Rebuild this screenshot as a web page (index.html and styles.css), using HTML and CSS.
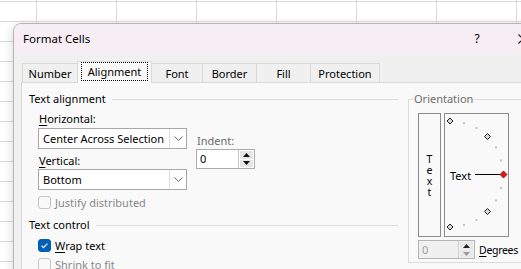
FILE: index.html
```html
<!DOCTYPE html>
<html>
<head>
<meta charset="utf-8">
<link rel="stylesheet" href="styles.css">
</head>
<body>
<div class="dialog">
  <div class="titlebar">
    <span class="title">Format Cells</span>
    <span class="help">?</span>
    <span class="close"><svg width="10" height="10" viewBox="0 0 10 10"><path d="M0.5 0.5L9.5 9.5M9.5 0.5L0.5 9.5" stroke="#1a1a1a" stroke-width="1.1" fill="none"/></svg></span>
  </div>
  <div class="tabs">
    <div class="tab t-number">Number</div>
    <div class="tab t-align active"><span class="focus">Alignment</span></div>
    <div class="tab t-font">Font</div>
    <div class="tab t-border">Border</div>
    <div class="tab t-fill">Fill</div>
    <div class="tab t-prot">Protection</div>
  </div>
  <div class="panel">
    <div class="left">
      <div class="heading"><span>Text alignment</span><i class="rule"></i></div>
      <div class="align-block">
        <div class="col1">
          <div class="lbl"><u>H</u>orizontal:</div>
          <div class="combo c1"><span class="val">Center Across Selection</span><span class="arrow"><svg width="9" height="5" viewBox="0 0 9 5"><path d="M0.5 0.5L4.5 4.5L8.5 0.5" stroke="#6a6a6a" fill="none"/></svg></span></div>
          <div class="lbl l2"><u>V</u>ertical:</div>
          <div class="combo"><span class="val">Bottom</span><span class="arrow"><svg width="9" height="5" viewBox="0 0 9 5"><path d="M0.5 0.5L4.5 4.5L8.5 0.5" stroke="#6a6a6a" fill="none"/></svg></span></div>
        </div>
        <div class="col2">
          <div class="lbl dim">Indent:</div>
          <div class="spin">
            <span class="sval">0</span>
            <span class="sbtns">
              <span class="sb"><svg width="7" height="4" viewBox="0 0 7 4"><path d="M3.5 0L7 4H0Z" fill="#111"/></svg></span>
              <span class="sb"><svg width="7" height="4" viewBox="0 0 7 4"><path d="M0 0H7L3.5 4Z" fill="#111"/></svg></span>
            </span>
          </div>
        </div>
      </div>
      <div class="check-row r-justify"><span class="cb off"></span><span class="ctext dimmer">Justify distributed</span></div>
      <div class="heading h2"><span>Text control</span><i class="rule"></i></div>
      <div class="check-row r-wrap"><span class="cb on"><svg width="11" height="11" viewBox="0 0 11 11"><path d="M2.6 5.7L4.5 7.6L8.4 3.6" stroke="#fff" stroke-width="1.1" fill="none"/></svg></span><span class="ctext"><u>W</u>rap text</span></div>
      <div class="check-row r-shrink"><span class="cb off"></span><span class="ctext dimmer">Shrink to fit</span></div>
    </div>
    <fieldset class="orient">
      <legend>Orientation</legend>
      <div class="obody">
        <div class="oboxes">
          <div class="vbox"><span class="vtext">Text</span></div>
          <div class="dial">
            <svg width="63" height="122" viewBox="0 0 63 122">
              <g fill="#c4c4c4">
                <rect x="18" y="8" width="2" height="2"/>
                <rect x="30.5" y="13" width="2" height="2"/>
                <rect x="50" y="32.5" width="2" height="2"/>
                <rect x="55" y="45.5" width="2" height="2"/>
                <rect x="55" y="73" width="2" height="2"/>
                <rect x="50" y="85.5" width="2" height="2"/>
                <rect x="30.5" y="105" width="2" height="2"/>
                <rect x="18" y="110" width="2" height="2"/>
              </g>
              <g fill="#d8d8d8" stroke="#202020" stroke-width="1">
                <path d="M5 4L8 7L5 10L2 7Z"/>
                <path d="M42.5 19.5L45.5 22.5L42.5 25.5L39.5 22.5Z"/>
                <path d="M42.5 94.5L45.5 97.5L42.5 100.5L39.5 97.5Z"/>
                <path d="M5 110L8 113L5 116L2 113Z"/>
              </g>
              <path d="M30 60.5H55" stroke="#000" stroke-width="1"/>
              <path d="M58.5 57L62 60.5L58.5 64L55 60.5Z" fill="#e81010" stroke="#8a0000" stroke-width="0.8"/>
              <text x="5" y="66" class="dtext">Text</text>
            </svg>
          </div>
        </div>
        <div class="drow">
          <div class="spin dspin">
            <span class="sval">0</span>
            <span class="sbtns">
              <span class="sb"><svg width="7" height="4" viewBox="0 0 7 4"><path d="M3.5 0L7 4H0Z" fill="#222"/></svg></span>
              <span class="sb"><svg width="7" height="4" viewBox="0 0 7 4"><path d="M0 0H7L3.5 4Z" fill="#9a9a9a"/></svg></span>
            </span>
          </div>
          <span class="dlabel"><u>D</u>egrees</span>
        </div>
      </div>
    </fieldset>
  </div>
</div>
</body>
</html>
```

FILE: styles.css
```css
* { box-sizing: border-box; }
html, body { margin: 0; padding: 0; }
body {
  width: 521px;
  height: 269px;
  overflow: hidden;
  position: relative;
  font-family: "Noto Sans", "Open Sans", sans-serif;
  font-size: 11px;
  color: #000;
  background-color: #fff;
  background-image:
    linear-gradient(to right, #dadada 1px, transparent 1px),
    linear-gradient(to bottom, #dadada 1px, transparent 1px);
  background-size: 80px 20px;
  background-position: 36px 1px;
}
u { text-decoration: underline; text-underline-offset: 2px; }

.dialog {
  position: absolute;
  left: 13px;
  top: 23px;
  width: 560px;
  height: 290px;
  border: 1px solid #b4b4b4;
  border-radius: 8px 8px 0 0;
  background: #f0f0f0;
  box-shadow: 0 3px 12px rgba(0, 0, 0, 0.16);
  overflow: hidden;
}
.titlebar {
  height: 29px;
  display: flex;
  align-items: center;
  padding-left: 9px;
  background: #f7eef4;
  font-size: 11.5px;
}
.title { width: 448px; }
.help { width: 12px; text-align: center; font-size: 12px; }
.close { margin-left: 35px; display: flex; }

.tabs {
  height: 29px;
  display: flex;
  align-items: flex-end;
  padding-left: 8px;
  position: relative;
  z-index: 1;
}
.tab {
  height: 19px;
  line-height: 19px;
  text-align: center;
  background: #f0f0f0;
  border: 1px solid #d9d9d9;
  border-bottom: none;
  border-left: none;
}
.t-number { width: 56px; border-left: 1px solid #d9d9d9; }
.t-align { width: 74px; }
.t-font { width: 51px; }
.t-border { width: 54px; }
.t-fill { width: 54px; }
.t-prot { width: 69px; }
.tab.active {
  height: 22px;
  margin-bottom: -1px;
  background: #f9f9f9;
  border-left: 1px solid #d9d9d9;
  margin-left: -1px;
  width: 75px;
  padding: 0 3px;
}
.focus {
  display: block;
  border: 1px dotted #000;
  height: 19px;
  line-height: 18px;
}

.panel {
  margin-left: 7px;
  height: 250px;
  background: #f9f9f9;
  border: 1px solid #d9d9d9;
  display: flex;
  align-items: flex-start;
  padding: 8px 0 0 7px;
}
.left { width: 369px; }
.heading {
  display: flex;
  align-items: center;
  height: 16px;
  line-height: 16px;
}
.rule {
  flex: 1;
  height: 1px;
  background: #dcdcdc;
  margin-left: 6px;
}
.align-block {
  display: flex;
  margin-left: 9px;
  margin-top: 4px;
}
.col1 { width: 149px; }
.lbl { height: 16px; line-height: 16px; padding-left: 1px; }
.l2 { margin-top: 4px; }
.dim { color: #6d6d6d; }
.dimmer { color: #8a8a8a; }
.combo {
  height: 21px;
  background: #fff;
  border: 1px solid #a8a8a8;
  display: flex;
  align-items: stretch;
}
.c1 { margin-top: 1px; }
.val {
  flex: 1;
  padding-left: 4px;
  line-height: 19px;
  white-space: nowrap;
}
.arrow {
  width: 17px;
  border-left: 1px solid #dedede;
  display: flex;
  align-items: center;
  justify-content: center;
}
.col2 {
  margin-left: 9px;
  padding-top: 22px;
  width: 59px;
}
.spin {
  height: 20px;
  background: #fff;
  border: 1px solid #acacac;
  display: flex;
}
.sval { flex: 1; padding-left: 3px; line-height: 18px; }
.sbtns {
  width: 16px;
  border-left: 1px solid #c4c4c4;
  display: flex;
  flex-direction: column;
  padding: 1px;
  gap: 1px;
}
.sb {
  flex: 1;
  background: #e6e6e6;
  display: flex;
  align-items: center;
  justify-content: center;
}
.check-row {
  display: flex;
  align-items: center;
  height: 13px;
  margin-left: 9px;
}
.r-justify { margin-top: 6px; }
.h2 { margin-top: 8px; }
.r-wrap { margin-top: 6px; }
.r-shrink { margin-top: 6px; }
.cb {
  width: 13px;
  height: 13px;
  border-radius: 3px;
  display: flex;
  align-items: center;
  justify-content: center;
  flex: none;
}
.cb.off { border: 1px solid #c6c6c6; background: #f9f9f9; }
.cb.on { background: #005fb8; border: 1px solid #005fb8; }
.ctext { margin-left: 4px; line-height: 16px; }

.orient {
  margin: 0 0 0 10px;
  padding: 6px 0 3px 0;
  border: 1px solid #dcdcdc;
  width: 130px;
  min-width: 0;
}
.orient legend {
  margin-left: 5px;
  padding: 0;
  height: 16px;
  line-height: 16px;
  color: #6d6d6d;
}
.obody { margin-left: 9px; }
.oboxes { display: flex; gap: 3px; }
.vbox {
  width: 23px;
  height: 124px;
  border: 1px solid #8c8c8c;
  display: flex;
  align-items: center;
  justify-content: center;
  padding-bottom: 2px;
}
.vtext {
  writing-mode: vertical-lr;
  text-orientation: upright;
  font-size: 10.5px;
  line-height: 12px;
  letter-spacing: -3px;
}
.dial {
  width: 65px;
  height: 124px;
  border: 1px solid #8c8c8c;
}
.dial svg { display: block; }
.dtext { font-family: "Noto Sans", sans-serif; font-size: 11px; fill: #000; }
.drow {
  margin-top: 3px;
  display: flex;
  align-items: center;
}
.dspin {
  width: 57px;
  height: 19px;
  background: #f0f0f0;
  border-color: #b4b4b4;
  color: #a0a0a0;
}
.dspin .sval { line-height: 17px; }
.dspin .sbtns { border-left-color: #d0d0d0; }
.dspin .sb { background: #e9e9e9; }
.dlabel { margin-left: 4px; line-height: 16px; font-size: 10.5px; letter-spacing: -0.3px; }
```
